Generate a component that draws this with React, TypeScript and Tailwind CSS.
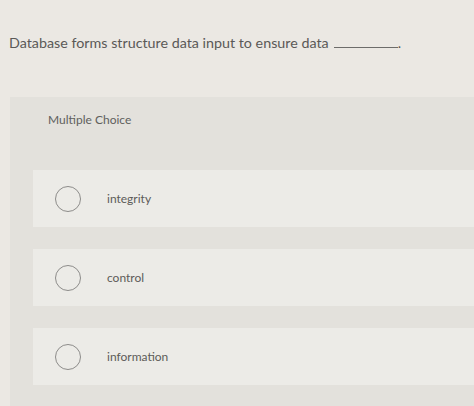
const options = ["integrity", "control", "information"]

function Radio() {
  return (
    <span className="block h-[26px] w-[26px] shrink-0 rounded-full border-[1.5px] border-[#8d8c8a]" />
  )
}

export default function App() {
  return (
    <div
      className="h-[406px] w-[474px] overflow-hidden bg-[#ebe8e3] text-[#5a5957]"
      style={{ fontFamily: "Lato, 'Liberation Sans', sans-serif" }}
    >
      {/* Question */}
      <div className="flex h-[97px] items-center pl-[9px] pb-[12px] text-[14.3px]">
        <span>Database forms structure data input to ensure data</span>
        <span className="ml-[5px] inline-block w-[64px] translate-y-[5px] border-b border-[#6d6c6a]" />
        <span>.</span>
      </div>

      {/* Answer panel */}
      <div className="ml-[10px] h-[309px] bg-[#e3e1dc] pl-[23px]">
        <p className="pl-[15px] pt-[15px] text-[12px] leading-[16px] text-[#605f5c]">Multiple Choice</p>
        <div className="mt-[42px] flex flex-col gap-[22px]">
          {options.map((o) => (
            <div key={o} className="flex h-[57px] items-center bg-[#ecebe7] pl-[22px]">
              <Radio />
              <span className="ml-[26px] text-[12px] text-[#5c5b58]">{o}</span>
            </div>
          ))}
        </div>
      </div>
    </div>
  )
}
